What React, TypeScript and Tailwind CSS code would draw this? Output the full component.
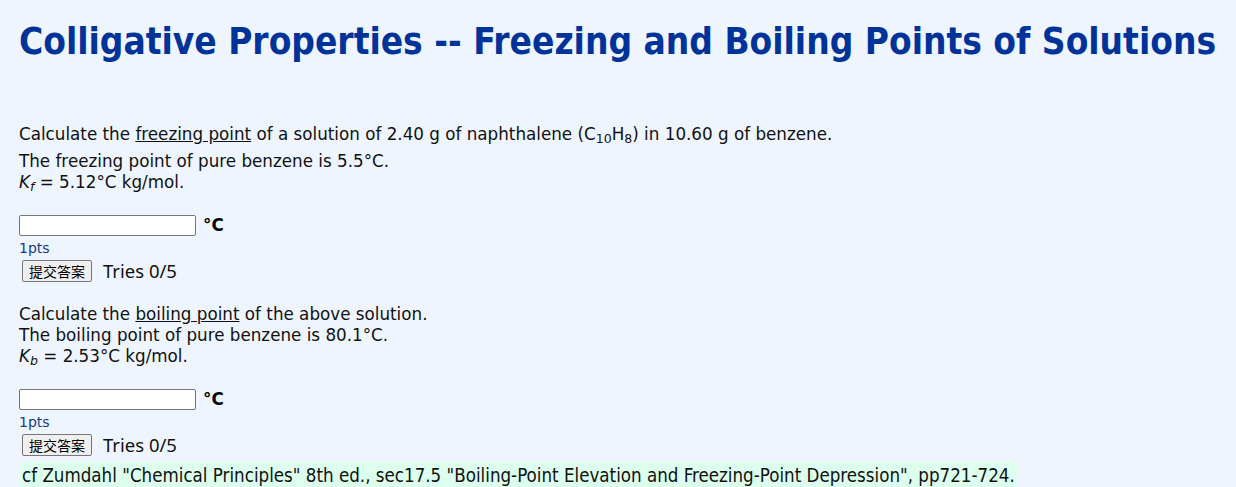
import type { ReactNode } from "react";

type QuestionProps = {
  children: ReactNode;
};

function AnswerBox() {
  return (
    <div>
      <div className="flex items-center gap-[7px]">
        <input
          type="text"
          className="w-[177px] h-[21px] bg-white border border-[#767676] rounded-[2px] outline-none"
        />
        <span className="font-bold text-[16.75px]">°C</span>
      </div>
      <div className="text-[14px] leading-[16px] text-[#1a3a8a] mt-[2px]">1pts</div>
      <div className="flex items-center gap-[11px] mt-[1px] ml-[3px]">
        <button
          className="h-[22px] px-[6px] text-[14px] leading-[20px] bg-[#efefef] border border-[#767676] rounded-[2px] text-black"
          style={{ fontFamily: '"Noto Sans CJK SC", sans-serif' }}
        >
          提交答案
        </button>
        <span className="text-[18.5px] text-[#111]" style={{ fontFamily: '"Noto Sans", sans-serif' }}>
          Tries 0/5
        </span>
      </div>
    </div>
  );
}

function Question({ children }: QuestionProps) {
  return <div className="text-[16.75px] leading-[21px] text-[#111]">{children}</div>;
}

export default function App() {
  return (
    <div
      className="min-h-screen bg-[#eef5ff] pl-[19px] pr-[19px] pt-[22px]"
      style={{ fontFamily: '"DejaVu Sans", Verdana, sans-serif' }}
    >
      <h1
        className="text-[36.7px] leading-[40px] font-bold text-[#003399] whitespace-nowrap"
        style={{ fontFamily: '"DejaVu Sans Condensed", "DejaVu Sans", sans-serif' }}
      >
        Colligative Properties -- Freezing and Boiling Points of Solutions
      </h1>

      <div className="mt-[60px]">
        <Question>
          <p className="leading-[24px]">
            Calculate the <u>freezing point</u> of a solution of 2.40 g of naphthalene (C
            <sub>10</sub>H<sub>8</sub>) in 10.60 g of benzene.
          </p>
          <p className="mt-[5px]">The freezing point of pure benzene is 5.5°C.</p>
          <p>
            <i>K<sub>f</sub></i> = 5.12°C kg/mol.
          </p>
        </Question>
        <div className="mt-[20px]">
          <AnswerBox />
        </div>

        <div className="mt-[19px]">
          <Question>
            <p>
              Calculate the <u>boiling point</u> of the above solution.
            </p>
            <p>The boiling point of pure benzene is 80.1°C.</p>
            <p>
              <i>K<sub>b</sub></i> = 2.53°C kg/mol.
            </p>
          </Question>
        </div>
        <div className="mt-[20px]">
          <AnswerBox />
        </div>

        <div
          className="inline-block mt-[3px] bg-[#ddffee] px-[3px] text-[18.6px] leading-[27px] text-[#111] whitespace-nowrap"
          style={{ fontFamily: '"DejaVu Sans Condensed", "DejaVu Sans", sans-serif' }}
        >
          cf Zumdahl "Chemical Principles" 8th ed., sec17.5 "Boiling-Point Elevation and Freezing-Point
          Depression", pp721-724.
        </div>
      </div>
    </div>
  );
}
